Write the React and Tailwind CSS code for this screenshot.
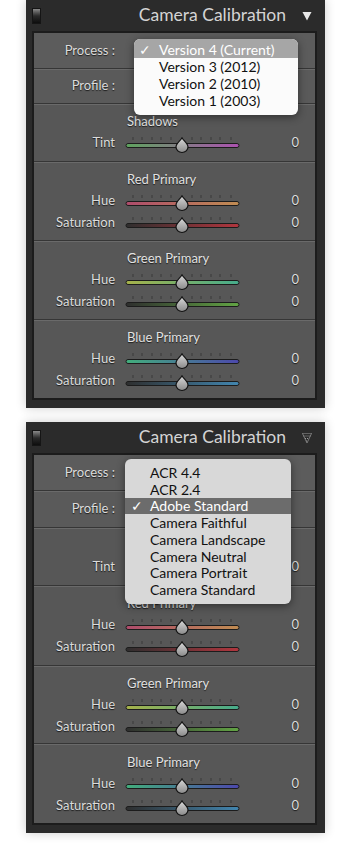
import React from 'react';

const font = { fontFamily: 'Lato, "Open Sans", sans-serif' };

const SLIDERS = {
  tint: ['#5ea35e', '#ac52b0'],
  redHue: ['#ae4c6c', '#c08c52'],
  redSat: ['#2e2e2e', '#b2363e'],
  greenHue: ['#a6b24a', '#46ac8c'],
  greenSat: ['#2e2e2e', '#62a444'],
  blueHue: ['#42ae7c', '#4c48ac'],
  blueSat: ['#2e2e2e', '#4286b0'],
};

// section heights differ a little between the two screenshots
const SIZES = {
  a: { profile: 'h-[35px]', red: 'h-[79px] pt-[9px]', green: 'h-[79px] pt-[9px]', blue: 'h-[79px] pt-[9px]' },
  b: { profile: 'h-[37px]', red: 'h-[80px] pt-[9px]', green: 'h-[78px] pt-[9px]', blue: 'h-[80px] pt-[10px]' },
};

const TICKS = [8, 17, 27, 36, 46, 57, 67, 76, 86, 95, 106];

const Slider = ({ id, prefix }) => {
  const [a, b] = SLIDERS[id];
  const gid = `${prefix}-${id}`;
  return (
    <svg width="115" height="22" viewBox="0 0 115 22" className="block shrink-0">
      <defs>
        <linearGradient id={gid} x1="0" x2="1" y1="0" y2="0">
          <stop offset="0" stopColor={a} />
          <stop offset="1" stopColor={b} />
        </linearGradient>
        <linearGradient id={`${gid}-t`} x1="0" x2="0" y1="0" y2="1">
          <stop offset="0" stopColor="#d8d8d8" />
          <stop offset="1" stopColor="#8a8a8a" />
        </linearGradient>
      </defs>
      {TICKS.map((x) => (
        <line key={x} x1={x} x2={x} y1="5" y2="8" stroke="#3a3a3a" strokeWidth="1" />
      ))}
      <rect x="1" y="11.5" width="113" height="4" rx="2" fill={`url(#${gid})`} stroke="#1c1c1c" strokeWidth="1" />
      <path
        d="M57 6 C59 9, 63 11.5, 63 15 A6 5.5 0 0 1 51 15 C51 11.5, 55 9, 57 6 Z"
        fill={`url(#${gid}-t)`}
        stroke="#111"
        strokeWidth="1.2"
      />
    </svg>
  );
};

const Label = ({ children }) => (
  <div className="w-[81px] shrink-0 text-right text-[13px] text-[#dcdcdc] [text-shadow:0_1px_1px_rgba(0,0,0,0.7)]">
    {children}
  </div>
);

const SliderRow = ({ label, id, prefix }) => (
  <div className="flex h-[22px] items-center">
    <Label>{label}</Label>
    <div className="ml-[10px]">
      <Slider id={id} prefix={prefix} />
    </div>
    <div className="flex-1 pr-[16px] text-right text-[13px] text-[#dcdcdc] [text-shadow:0_1px_1px_rgba(0,0,0,0.7)]">
      0
    </div>
  </div>
);

const Title = ({ children, hidden }) => (
  <div
    className={`mb-[1px] flex h-[18px] items-center pl-[93px] text-[13px] text-[#e2e2e2] [text-shadow:0_1px_1px_rgba(0,0,0,0.7)] ${hidden ? 'invisible' : ''}`}
  >
    {children}
  </div>
);

const divider = 'border-t border-[#363636] shadow-[inset_0_1px_0_#6a6a6a]';

const Primary = ({ name, color, prefix }) => (
  <div className={`${SIZES[prefix][color]} ${divider}`}>
    <Title>{name} Primary</Title>
    <SliderRow label="Hue" id={`${color}Hue`} prefix={prefix} />
    <SliderRow label="Saturation" id={`${color}Sat`} prefix={prefix} />
  </div>
);

const SolidTriangle = () => (
  <svg width="10" height="10" viewBox="0 0 10 10">
    <path d="M0.5 1 L9.5 1 L5 9.5 Z" fill="#e8e8e8" />
  </svg>
);

const OpenTriangle = () => (
  <svg width="10" height="12" viewBox="0 0 10 12">
    <g stroke="#9a9a9a" strokeWidth="1" fill="none" strokeDasharray="1 1">
      <path d="M0.5 1.5 L9.5 1.5" />
      <path d="M1.5 4 L8.5 4" />
      <path d="M3 6.5 L7 6.5" />
      <path d="M4 9 L6 9" />
    </g>
    <path d="M0.5 1.5 L5 11 L9.5 1.5" stroke="#8a8a8a" strokeWidth="0.8" fill="none" />
  </svg>
);

const Panel = ({ prefix, open, children, className = '' }) => (
  <div
    className={`relative w-[299px] bg-[#2b2b2b] pb-[8px] pl-[6px] pr-[8px] shadow-[0_0_10px_rgba(0,0,0,0.2)] ${className}`}
    style={font}
  >
    <div className="flex h-[31px] items-center">
      <div className="h-[16px] w-[9px] border border-[#151515] bg-gradient-to-b from-[#8a8a8a] via-[#2a2a2a] to-[#0e0e0e]" />
      <div className="ml-auto text-[17.5px] text-[#d4d4d4]">Camera Calibration</div>
      <div className="ml-[16px] mr-[5px] flex items-center">
        {open ? <SolidTriangle /> : <OpenTriangle />}
      </div>
    </div>
    <div className="border-2 border-[#1c1c1c] bg-[#575757]">
      <div className="flex h-[35px] items-center bg-[#5c5c5c]">
        <Label>Process :</Label>
      </div>
      <div className={`flex ${SIZES[prefix].profile} items-center bg-[#5a5a5a] ${divider}`}>
        <Label>Profile :</Label>
      </div>
      <div className={`h-[58px] pt-[9px] ${divider}`}>
        <Title hidden={!open}>Shadows</Title>
        <SliderRow label="Tint" id="tint" prefix={prefix} />
      </div>
      <Primary name="Red" color="red" prefix={prefix} />
      <Primary name="Green" color="green" prefix={prefix} />
      <Primary name="Blue" color="blue" prefix={prefix} />
    </div>
    {children}
  </div>
);

const ProcessMenu = () => {
  const items = ['Version 3 (2012)', 'Version 2 (2010)', 'Version 1 (2003)'];
  return (
    <div className="absolute left-[108px] top-[39px] w-[164px] overflow-hidden rounded-[6px] bg-[#fbfbfb] pb-[6px] text-[14px] text-[#111] shadow-[0_2px_8px_rgba(0,0,0,0.45)]">
      <div className="flex h-[19px] items-center bg-[#a6a6a6] pt-[2px] text-white">
        <span className="w-[25px] pl-[5px]">✓</span>
        <span>Version 4 (Current)</span>
      </div>
      {items.map((t) => (
        <div key={t} className="flex h-[17px] items-center pl-[25px]">
          {t}
        </div>
      ))}
    </div>
  );
};

const ProfileMenu = () => {
  const items = [
    'ACR 4.4',
    'ACR 2.4',
    'Adobe Standard',
    'Camera Faithful',
    'Camera Landscape',
    'Camera Neutral',
    'Camera Portrait',
    'Camera Standard',
  ];
  return (
    <div className="absolute left-[99px] top-[37px] w-[166px] rounded-[6px] bg-[#d8d8d8] pb-[6px] pt-[5px] text-[14px] text-[#111] shadow-[0_2px_8px_rgba(0,0,0,0.45)]">
      {items.map((t) =>
        t === 'Adobe Standard' ? (
          <div key={t} className="flex h-[16.75px] items-center bg-[#6c6c6c] text-white">
            <span className="w-[25px] pl-[6px]">✓</span>
            <span>{t}</span>
          </div>
        ) : (
          <div key={t} className="flex h-[16.75px] items-center pl-[25px]">
            {t}
          </div>
        )
      )}
    </div>
  );
};

export default function App() {
  return (
    <div className="min-h-[846px] w-[342px] bg-white pl-[26px]">
      <Panel prefix="a" open>
        <ProcessMenu />
      </Panel>
      <Panel prefix="b" className="mt-[14px]">
        <ProfileMenu />
      </Panel>
    </div>
  );
}
